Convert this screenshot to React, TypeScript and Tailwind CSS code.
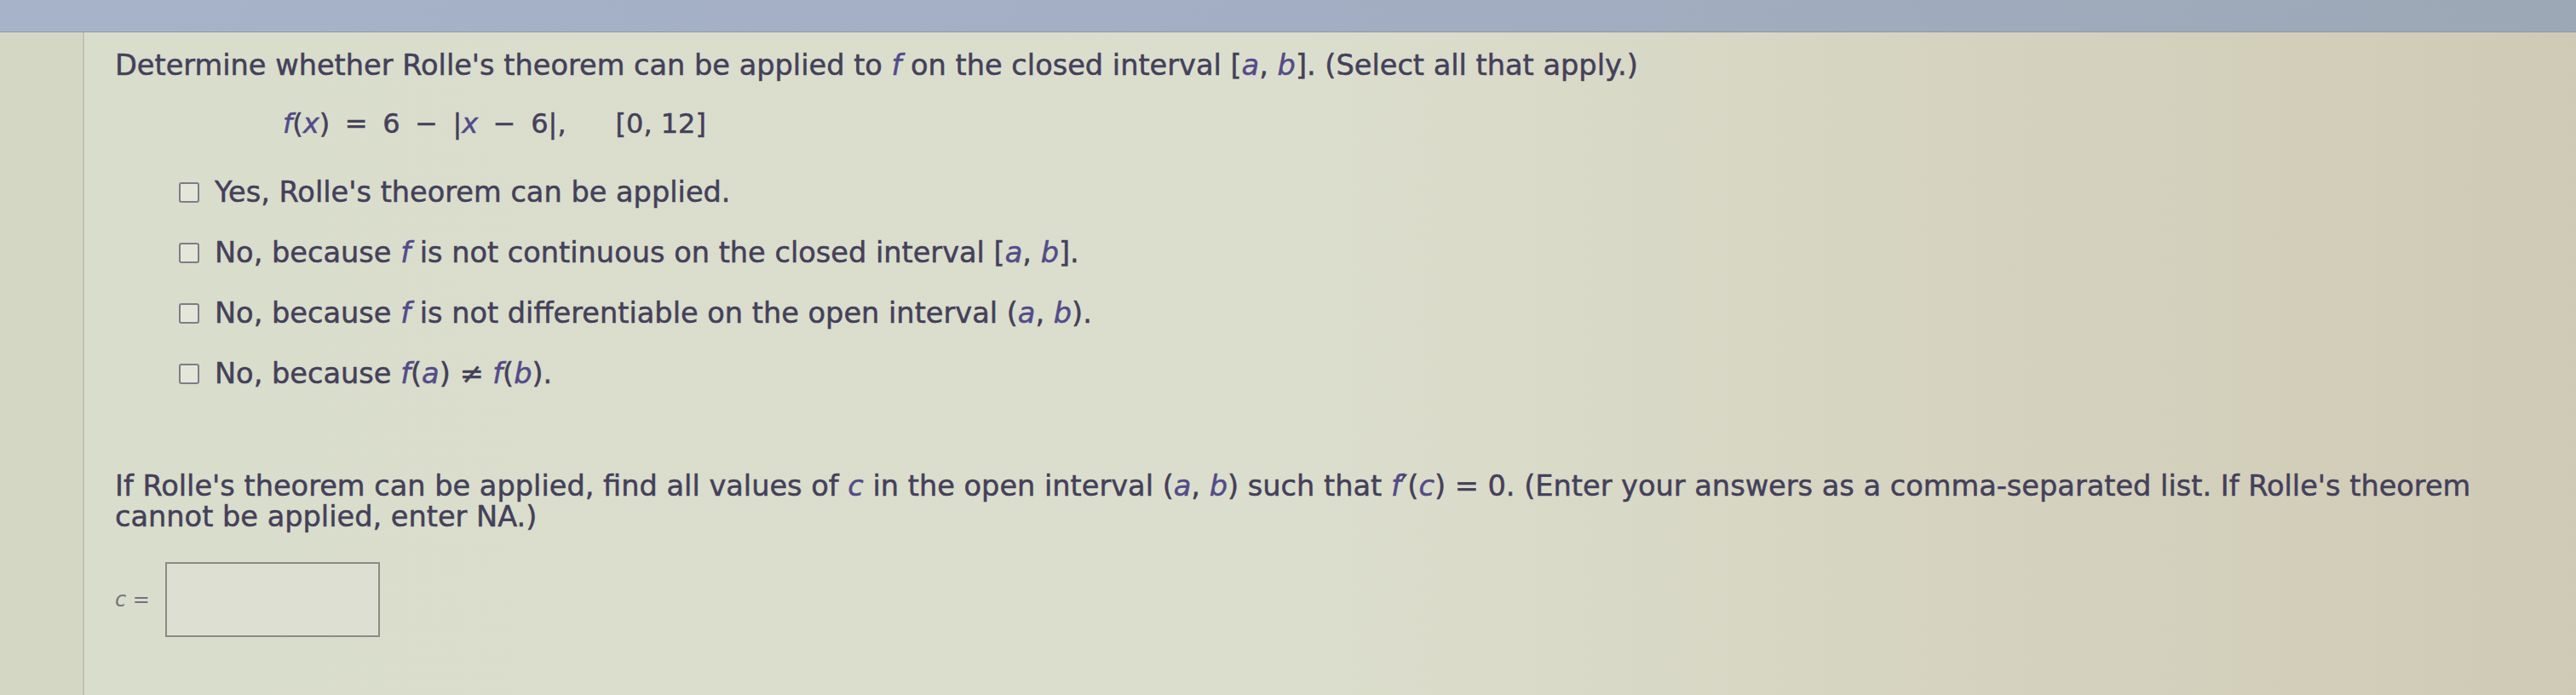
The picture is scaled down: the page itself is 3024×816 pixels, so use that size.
import React from 'react'

const M = ({ children }: { children: React.ReactNode }) => (
  <span className="italic text-[#524b8a]">{children}</span>
)

const Op = ({ children }: { children: React.ReactNode }) => (
  <span className="mx-[0.55em]">{children}</span>
)

function Box() {
  return (
    <span className="inline-block w-[24px] h-[24px] shrink-0 rounded-[3px] border-2 border-[#7f7c8a] bg-[#e4e6da]" />
  )
}

function Option({ children }: { children: React.ReactNode }) {
  return (
    <div className="flex items-center gap-[18px]">
      <Box />
      <span>{children}</span>
    </div>
  )
}

export default function App() {
  return (
    <div className="w-[3024px] h-[816px] overflow-hidden flex flex-col bg-gradient-to-r from-[#d9ddcb] via-[#dcdecd] to-[#cfcab5]">
      {/* top bar of the browser window */}
      <div className="h-[38px] shrink-0 bg-gradient-to-r from-[#a7b3c9] via-[#a3aec4] to-[#9ca8b5] border-b border-[#8f98a8]" />

      <div className="flex flex-1">
        <div className="w-[99px] shrink-0 border-r-2 border-[#c3c2b3] bg-[#d5d7c5]" />

        <div
          className="flex-1 pl-[36px] pt-[21px] text-[33.6px] leading-[36px] text-[#44405a] [-webkit-text-stroke:0.5px_currentColor]"
          style={{ fontFamily: '"DejaVu Sans", Verdana, sans-serif' }}
        >
          <p>
            Determine whether Rolle's theorem can be applied to <M>f</M> on the closed interval [<M>a</M>, <M>b</M>]. (Select all that apply.)
          </p>

          <p className="mt-[32px] pl-[197px] text-[32px]">
            <M>f</M>(<M>x</M>)<Op>=</Op>6<Op>−</Op>|<M>x</M><Op>−</Op>6|,<span className="inline-block w-[58px]" />[0, 12]
          </p>

          <div className="mt-[45px] pl-[75px] flex flex-col gap-[35px]">
            <Option>Yes, Rolle's theorem can be applied.</Option>
            <Option>
              No, because <M>f</M> is not continuous on the closed interval [<M>a</M>, <M>b</M>].
            </Option>
            <Option>
              No, because <M>f</M> is not differentiable on the open interval (<M>a</M>, <M>b</M>).
            </Option>
            <Option>
              No, because <M>f</M>(<M>a</M>) ≠ <M>f</M>(<M>b</M>).
            </Option>
          </div>

          <p className="mt-[96px]">
            If Rolle's theorem can be applied, find all values of <M>c</M> in the open interval (<M>a</M>, <M>b</M>) such that <M>f</M>′(<M>c</M>) = 0. (Enter your answers as a comma-separated list. If Rolle's theorem
            <br />
            cannot be applied, enter NA.)
          </p>

          <div className="mt-[35px] flex items-center gap-[18px]">
            <span className="text-[24px] text-[#75737f] [-webkit-text-stroke:0px]">
              <span className="italic">c</span> =
            </span>
            <div className="w-[252px] h-[88px] border-2 border-[#8c8b84] bg-[#dcdfd1]" />
          </div>
        </div>
      </div>
    </div>
  )
}
